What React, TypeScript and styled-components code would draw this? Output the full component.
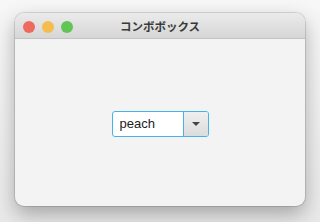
import React from 'react';
import styled, { createGlobalStyle } from 'styled-components';

const GlobalStyle = createGlobalStyle`
    html, body {
        margin: 0;
        padding: 0;
        background: #ececec;
    }
`;

const Desktop = styled.div`
    width: 320px;
    height: 222px;
    box-sizing: border-box;
    padding: 13px 15px 16px;
    background: linear-gradient(#f7f7f7, #e9e9e9);
`;

const Window = styled.div`
    width: 290px;
    height: 193px;
    display: flex;
    flex-direction: column;
    border-radius: 9px;
    overflow: hidden;
    background: #f3f3f3;
    box-shadow: 0 0 0 1px rgba(0, 0, 0, 0.12), 0 8px 20px rgba(0, 0, 0, 0.3);
`;

const TitleBar = styled.div`
    height: 26px;
    flex-shrink: 0;
    position: relative;
    display: flex;
    align-items: center;
    justify-content: center;
    padding-top: 1px;
    box-sizing: border-box;
    background: linear-gradient(#ebebeb, #d6d6d6);
    border-bottom: 1px solid #c3c3c3;
`;

const Lights = styled.div`
    position: absolute;
    left: 8px;
    top: 8px;
    display: flex;
    gap: 7px;
`;

const Light = styled.span<{ $color: string }>`
    width: 12px;
    height: 12px;
    border-radius: 50%;
    background: ${p => p.$color};
`;

const Title = styled.div`
    font-family: "Noto Sans CJK JP", sans-serif;
    font-weight: 700;
    font-size: 11.5px;
    color: #3a3a3a;
`;

const Content = styled.div`
    flex: 1;
    display: flex;
    align-items: center;
    justify-content: center;
    padding-top: 2px;
`;

const Combo = styled.div`
    display: flex;
    width: 97px;
    height: 26px;
    box-sizing: border-box;
    border: 1.5px solid #46b3e6;
    border-radius: 3px;
    background: #fff;
    overflow: hidden;
`;

const Field = styled.div`
    flex: 1;
    display: flex;
    align-items: center;
    padding-left: 7px;
    font-family: "Liberation Sans", Arial, sans-serif;
    font-size: 13px;
    color: #222;
`;

const ArrowButton = styled.div`
    width: 24px;
    display: flex;
    align-items: center;
    justify-content: center;
    border-left: 1.5px solid #46b3e6;
    background: linear-gradient(#efefef, #dcdcdc);
`;

const Arrow = styled.span`
    width: 0;
    height: 0;
    border-left: 4px solid transparent;
    border-right: 4px solid transparent;
    border-top: 4px solid #444;
`;

const App: React.FC = () => {
    return (
        <>
            <GlobalStyle />
            <Desktop>
                <Window>
                    <TitleBar>
                        <Lights>
                            <Light $color="#ee6a5f" />
                            <Light $color="#f5bd4f" />
                            <Light $color="#61c454" />
                        </Lights>
                        <Title>コンボボックス</Title>
                    </TitleBar>
                    <Content>
                        <Combo>
                            <Field>peach</Field>
                            <ArrowButton>
                                <Arrow />
                            </ArrowButton>
                        </Combo>
                    </Content>
                </Window>
            </Desktop>
        </>
    );
};

export default App;
